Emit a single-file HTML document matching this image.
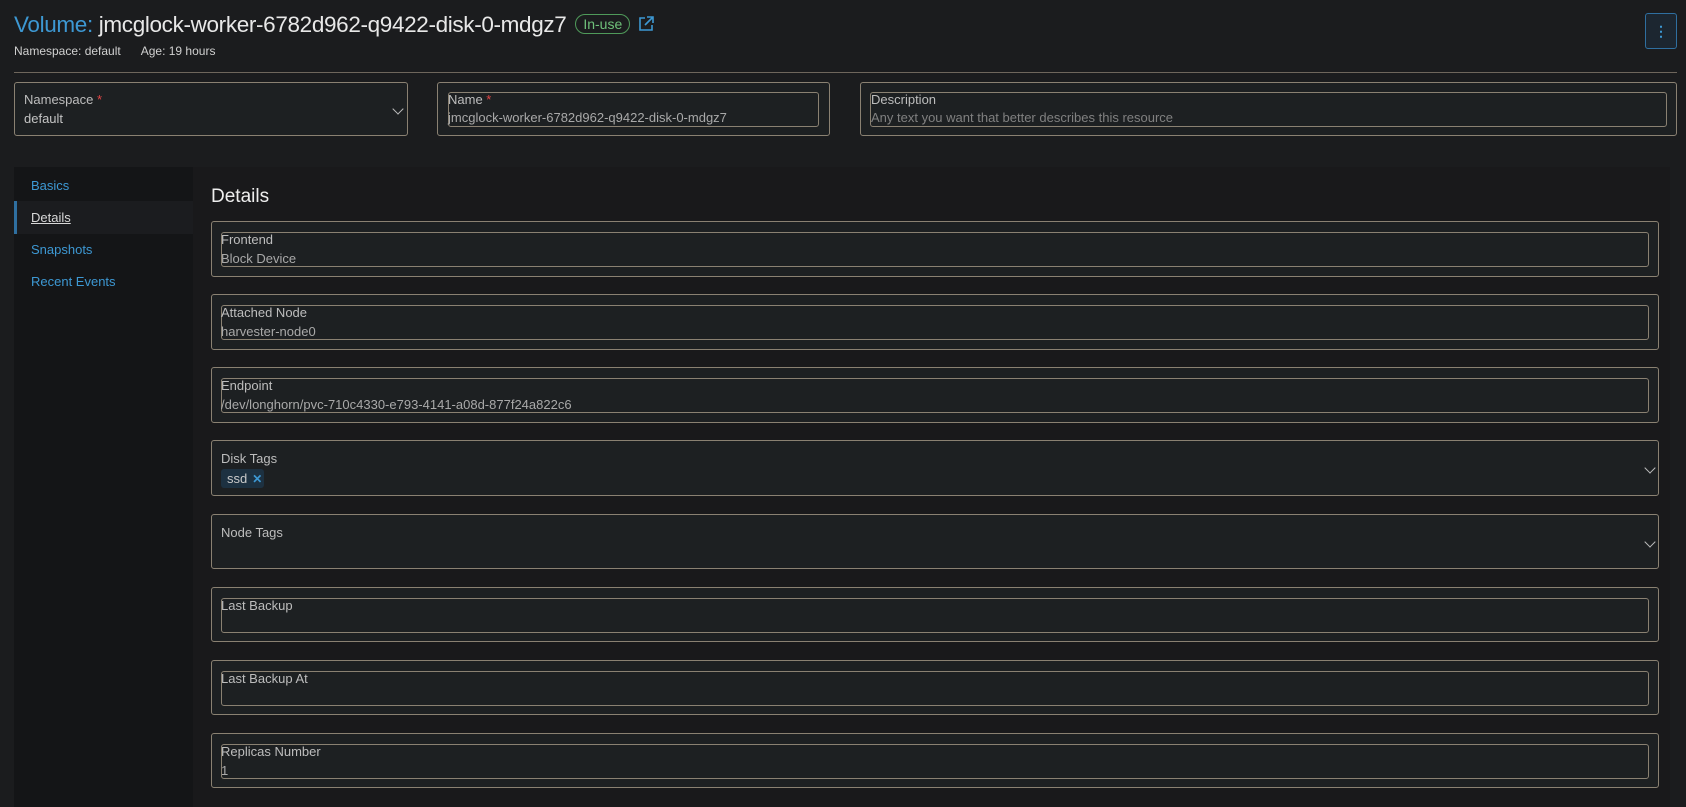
<!DOCTYPE html>
<html><head><meta charset="utf-8"><style>
*{box-sizing:border-box;margin:0;padding:0}
body{width:1686px;height:807px;background:#1b1c1e;font-family:"Liberation Sans",sans-serif;color:#c9c9c9;position:relative;overflow:hidden}
.abs{position:absolute}
.title{left:14px;top:12px;font-size:22.5px;color:#e8e8e8;white-space:nowrap;letter-spacing:-0.35px}
.title .v{color:#3d98d3}
.badge{display:inline-block;border:1px solid #4f9a5a;color:#6fc07a;border-radius:11px;font-size:14px;padding:1px 7px;vertical-align:3px;margin-left:3px;letter-spacing:0}
.sub{left:14px;top:44px;font-size:12px;color:#d0d0d0}
.hr{left:14px;top:72px;width:1663px;height:1px;background:#6e665c}
.kebab{left:1645px;top:13px;width:32px;height:36px;border:1px solid #2f6fa0;border-radius:3px;background:#1c2630;color:#3d98d3;text-align:center;line-height:34px;font-size:14px;font-weight:bold}
.box{border:1px solid #8a8172;border-radius:3px;background:#1d2022}
.inner{border:1px solid #8a8172;border-radius:3px}
.lbl{font-size:13px;color:#bdbdbd;white-space:nowrap}
.val{font-size:13px;color:#a9a9a9;white-space:nowrap}
.req{color:#e34646}
.side{left:14px;top:167px;width:179px;height:640px;background:#141517}
.panel{left:193px;top:167px;width:1477px;height:640px;background:#19191b}
.nav{position:absolute;left:17px;font-size:13px;color:#3d98d3}
.chev{position:absolute;width:8px;height:8px;border-right:1.5px solid #bbb;border-bottom:1.5px solid #bbb;transform:rotate(45deg)}
</style></head><body>
<div class="abs title"><span class="v">Volume:</span> jmcglock-worker-6782d962-q9422-disk-0-mdgz7 <span class="badge">In-use</span>
<svg width="16" height="16" viewBox="0 0 16 16" style="vertical-align:0px;margin-left:2px"><path d="M7 2H2v12h12V9" fill="none" stroke="#3d98d3" stroke-width="1.6"/><path d="M9 1h6v6M15 1L7 9" fill="none" stroke="#3d98d3" stroke-width="1.6"/></svg></div>
<div class="abs sub">Namespace: default&nbsp;&nbsp;&nbsp;&nbsp;&nbsp;&nbsp;Age: 19 hours</div>
<div class="abs kebab">⋮</div>
<div class="abs hr"></div>

<div class="abs box" style="left:14px;top:82px;width:394px;height:54px">
<div class="abs lbl" style="left:9px;top:9px">Namespace <span class="req">*</span></div>
<div class="abs lbl" style="left:9px;top:28px;color:#c4c4c4">default</div>
<div class="chev" style="left:379px;top:22px"></div></div>

<div class="abs box" style="left:437px;top:82px;width:393px;height:54px">
<div class="abs inner" style="left:10px;top:9px;width:371px;height:35px"></div>
<div class="abs lbl" style="left:10px;top:9px">Name <span class="req">*</span></div>
<div class="abs val" style="left:10px;top:27px">jmcglock-worker-6782d962-q9422-disk-0-mdgz7</div></div>

<div class="abs box" style="left:860px;top:82px;width:817px;height:54px">
<div class="abs inner" style="left:9px;top:9px;width:797px;height:35px"></div>
<div class="abs lbl" style="left:10px;top:9px">Description</div>
<div class="abs val" style="left:10px;top:27px;color:#808080">Any text you want that better describes this resource</div></div>

<div class="abs side">
<div class="nav" style="top:11px">Basics</div>
<div class="abs" style="left:0;top:34px;width:179px;height:33px;background:#1b1c1f;border-left:3px solid #2f6fa0"></div>
<div class="nav" style="top:43px;color:#d8d8d8;text-decoration:underline">Details</div>
<div class="nav" style="top:75px">Snapshots</div>
<div class="nav" style="top:107px">Recent Events</div>
</div>
<div class="abs panel"></div>
<div class="abs" style="left:211px;top:186px;font-size:19px;color:#eee">Details</div>

<div class="abs box" style="left:211px;top:221px;width:1448px;height:56px"><div class="abs inner" style="left:9px;top:10px;width:1428px;height:35px"></div><div class="abs lbl" style="left:9px;top:10px">Frontend</div><div class="abs val" style="left:9px;top:29px">Block Device</div></div>
<div class="abs box" style="left:211px;top:294px;width:1448px;height:56px"><div class="abs inner" style="left:9px;top:10px;width:1428px;height:35px"></div><div class="abs lbl" style="left:9px;top:10px">Attached Node</div><div class="abs val" style="left:9px;top:29px">harvester-node0</div></div>
<div class="abs box" style="left:211px;top:367px;width:1448px;height:56px"><div class="abs inner" style="left:9px;top:10px;width:1428px;height:35px"></div><div class="abs lbl" style="left:9px;top:10px">Endpoint</div><div class="abs val" style="left:9px;top:29px">/dev/longhorn/pvc-710c4330-e793-4141-a08d-877f24a822c6</div></div>
<div class="abs box" style="left:211px;top:440px;width:1448px;height:56px"><div class="abs lbl" style="left:9px;top:10px">Disk Tags</div>
<div class="abs" style="left:9px;top:28px;width:43px;height:19px;background:#1d3141;border-radius:3px;font-size:13px;color:#c9c9c9;padding:2px 0 0 6px;white-space:nowrap">ssd<span style="color:#3d98d3;font-weight:bold;margin-left:5px;font-size:12px">✕</span></div>
<div class="chev" style="left:1434px;top:23px"></div></div>
<div class="abs box" style="left:211px;top:514px;width:1448px;height:55px"><div class="abs lbl" style="left:9px;top:10px">Node Tags</div><div class="chev" style="left:1434px;top:23px"></div></div>
<div class="abs box" style="left:211px;top:587px;width:1448px;height:55px"><div class="abs inner" style="left:9px;top:10px;width:1428px;height:35px"></div><div class="abs lbl" style="left:9px;top:10px">Last Backup</div></div>
<div class="abs box" style="left:211px;top:660px;width:1448px;height:55px"><div class="abs inner" style="left:9px;top:10px;width:1428px;height:35px"></div><div class="abs lbl" style="left:9px;top:10px">Last Backup At</div></div>
<div class="abs box" style="left:211px;top:733px;width:1448px;height:55px"><div class="abs inner" style="left:9px;top:10px;width:1428px;height:35px"></div><div class="abs lbl" style="left:9px;top:10px">Replicas Number</div><div class="abs val" style="left:9px;top:29px">1</div></div>
</body></html>
